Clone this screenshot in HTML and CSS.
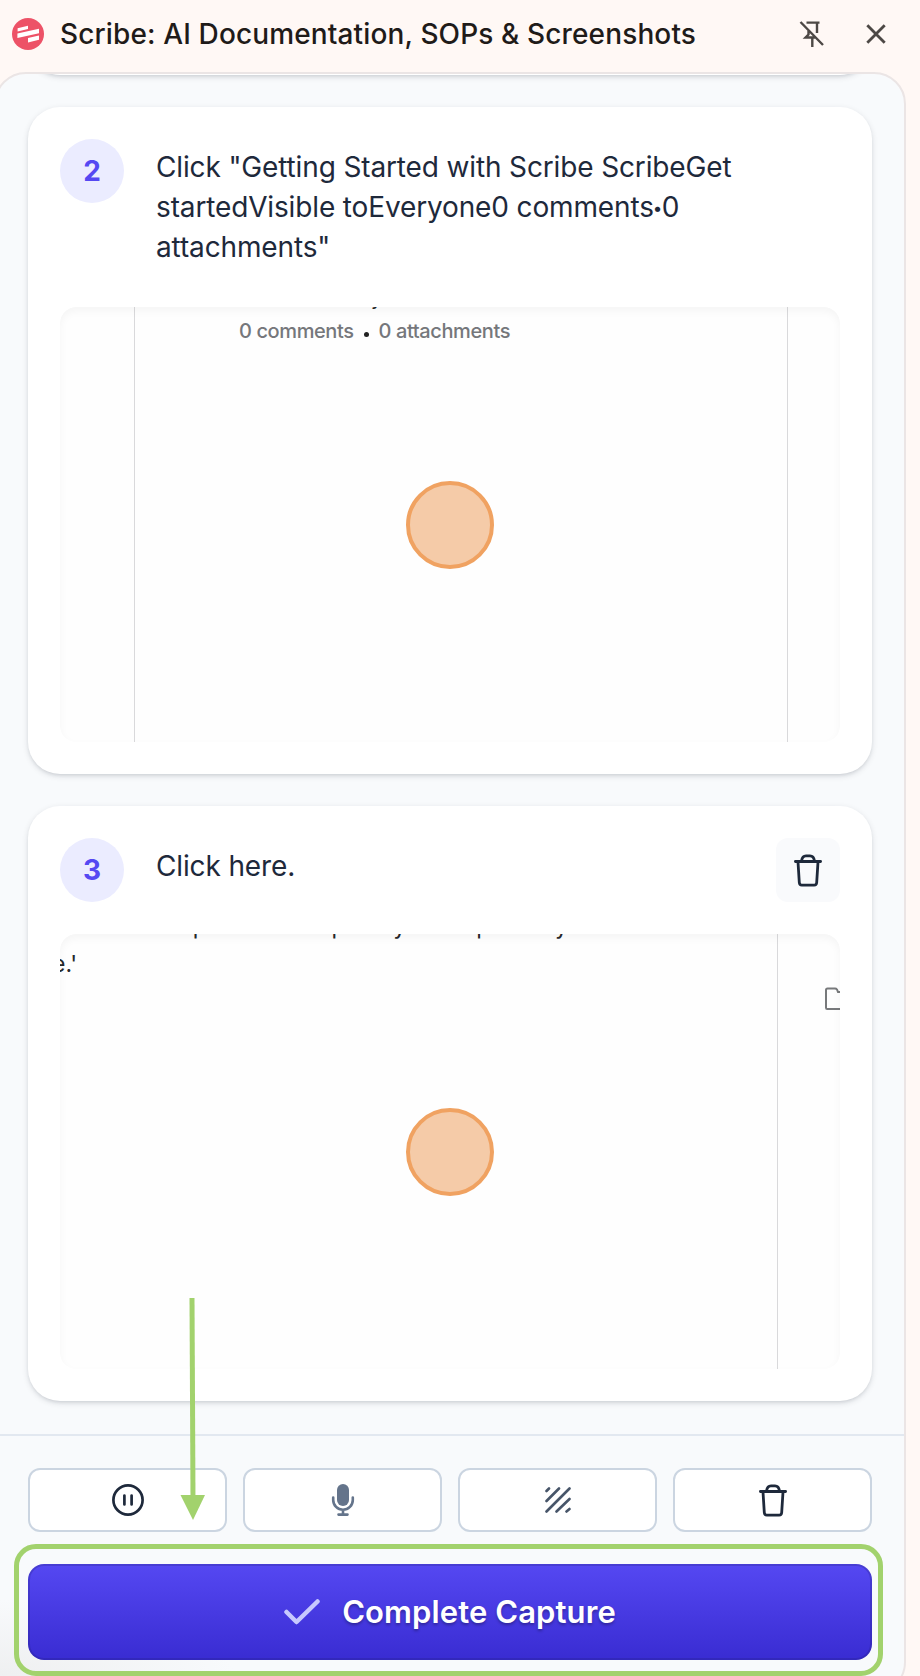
FILE: index.html
```html
<!DOCTYPE html>
<html lang="en">
  <head>
    <meta charset="UTF-8" />
    <meta name="viewport" content="width=device-width, initial-scale=1.0" />
    <title>Scribe: AI Documentation, SOPs &amp; Screenshots</title>
    <link rel="stylesheet" href="styles.css">
  </head>
  <body>
    <header class="topbar">
      <svg class="logo" viewBox="0 0 32 32">
        <circle cx="16" cy="16" r="16" fill="#ed5267" />
        <path d="M5.6 10.3L16 7.8V11L5.6 13.6zM5.4 15.4L27 10.8V15.3L5.4 19.9zM16 20L27 17.4V21.8L16 24.4z" fill="#fff" />
      </svg>
      <h1 class="title">Scribe: AI Documentation, SOPs &amp; Screenshots</h1>
      <button class="icon-button" aria-label="Unpin">
        <svg width="26" height="28" viewBox="0 0 26 28" fill="none" stroke="#4d4845" stroke-width="2.4">
          <path d="M1.5 2L24 25M7.5 2.6H20.5M18 2.6V13M9.5 10v4.5L6.5 17.5H16M13.3 17.5V27" />
        </svg>
      </button>
      <button class="icon-button" aria-label="Close">
        <svg width="20" height="20" viewBox="0 0 20 20" fill="none" stroke="#4d4845" stroke-width="2.8">
          <path d="M1.3 1.3l17.4 17.4M18.7 1.3L1.3 18.7" />
        </svg>
      </button>
    </header>

    <main class="panel">
      <div class="steps">
        <div class="card card-previous"></div>

        <div class="card">
          <div class="step-head">
            <span class="step-number">2</span>
            <p class="step-text">Click "Getting Started with Scribe ScribeGet startedVisible toEveryone0 comments<span class="bullet">•</span>0 attachments"</p>
          </div>
          <div class="preview">
            <div class="page page-narrow">
              <p class="clipped-name">y</p>
              <p class="meta"><span>0 comments</span><i class="dot"></i><span>0 attachments</span></p>
            </div>
            <span class="click-marker"></span>
          </div>
        </div>

        <div class="card">
          <div class="step-head">
            <span class="step-number">3</span>
            <p class="step-text">Click here.</p>
            <button class="delete-step" aria-label="Delete step">
              <svg width="28" height="33" viewBox="0 0 28 33" fill="none" stroke="#1e293b" stroke-width="2.8" stroke-linecap="round" stroke-linejoin="round">
                <path d="M1.4 7.5H26.6M7.5 7C8 3.5 9.5 1.8 12 1.8h4c2.5 0 4 1.7 4.5 5.2M4 8l1.3 20.5q.2 2.7 2.5 2.7h12.4q2.3 0 2.5-2.7L24 8" />
              </svg>
            </button>
          </div>
          <div class="preview">
            <div class="page page-wide">
              <p class="clipped-line">'Find the option to complete your capture by</p>
              <p class="clipped-end">e.'</p>
            </div>
            <svg class="file-icon" width="15" height="24" viewBox="0 0 15 24" fill="none" stroke="#77797b" stroke-width="2">
              <path d="M15 22H2.2q-1.2 0-1.2-1.2V3q0-1.5 1.5-1.5H10q1.2 0 2 1l1 2.5h3" />
            </svg>
            <span class="click-marker"></span>
          </div>
        </div>
      </div>

      <footer class="footer">
        <div class="tools">
          <button class="tool" aria-label="Pause">
            <svg width="32" height="32" viewBox="0 0 32 32" fill="none" stroke="#1e293b" stroke-width="2.7" stroke-linecap="round">
              <circle cx="16" cy="16" r="14.6" />
              <path d="M12.4 11.5v9M19.6 11.5v9" />
            </svg>
          </button>
          <button class="tool" aria-label="Microphone">
            <svg width="24" height="32" viewBox="0 0 24 32" fill="none" stroke="#64748b" stroke-width="2.6" stroke-linecap="round">
              <rect x="6" y="0" width="12" height="22" rx="6" fill="#64748b" stroke="none" />
              <path d="M2.2 13.5V16a9.8 9.8 0 0 0 19.6 0v-2.5M12 26v4M7.5 30.6h9" />
            </svg>
          </button>
          <button class="tool" aria-label="Blur">
            <svg width="26" height="26" viewBox="0 0 26 26" fill="none" stroke="#475569" stroke-width="2.6" stroke-linecap="round">
              <path d="M1.5 4L4 1.5M1.5 14L14 1.5M1.5 24.5L24.5 1.5M11.5 24.5L24.5 12M21.5 24.5L24.5 22" />
            </svg>
          </button>
          <button class="tool" aria-label="Delete capture">
            <svg width="28" height="33" viewBox="0 0 28 33" fill="none" stroke="#1e293b" stroke-width="2.8" stroke-linecap="round" stroke-linejoin="round">
              <path d="M1.4 7.5H26.6M7.5 7C8 3.5 9.5 1.8 12 1.8h4c2.5 0 4 1.7 4.5 5.2M4 8l1.3 20.5q.2 2.7 2.5 2.7h12.4q2.3 0 2.5-2.7L24 8" />
            </svg>
          </button>
        </div>
        <div class="complete-wrap">
          <button class="complete">
            <svg width="36" height="26" viewBox="0 0 36 26" fill="none" stroke="#c7c9fe" stroke-width="4.5" stroke-linecap="round" stroke-linejoin="round">
              <path d="M2.5 13l10 10L33.5 2.5" />
            </svg>
            <span class="complete-label">Complete Capture</span>
          </button>
          <span class="highlight"></span>
        </div>
      </footer>
    </main>

    <svg class="arrow" width="26" height="224" viewBox="0 0 26 224">
      <path d="M12 0L13 200" stroke="#a2d26d" stroke-width="5" />
      <path d="M0.5 197H25L13 222z" fill="#a2d26d" />
    </svg>
  </body>
</html>
```

FILE: styles.css
```css
* {
  box-sizing: border-box;
}
body {
  margin: 0;
  width: 920px;
  height: 1676px;
  overflow: hidden;
  position: relative;
  background-color: #fff8f5;
  font-family: Inter, "Liberation Sans", sans-serif;
}
h1,
p {
  margin: 0;
}
button {
  border: none;
  padding: 0;
  font-family: inherit;
  display: flex;
  align-items: center;
  justify-content: center;
}
svg {
  display: block;
  flex: none;
}
.topbar {
  height: 72px;
  display: flex;
  align-items: center;
  padding: 0 24px 4px 12px;
}
.logo {
  width: 32px;
  height: 32px;
}
.title {
  flex: 1;
  margin-left: 16px;
  font-size: 28px;
  font-weight: 550;
  line-height: 40px;
  letter-spacing: 0.13px;
  white-space: nowrap;
  color: #1f1b19;
}
.icon-button {
  width: 40px;
  height: 40px;
  margin-left: 24px;
  background: none;
}
.panel {
  width: 912px;
  height: 1622px;
  margin-left: -6px;
  border: 2px solid #ebe5e5;
  border-radius: 32px;
  overflow: hidden;
  background: radial-gradient(ellipse 240px 80px at 0 1606px, #eeeff0, #f8fafc);
}
.steps {
  display: flex;
  flex-direction: column;
  gap: 32px;
  height: 1360px;
  padding: 0 32px;
}
.card {
  padding: 32px;
  border-radius: 32px;
  background-color: #fff;
  box-shadow: 0 2px 6px rgba(15, 23, 42, 0.12), 0 2px 4px -2px rgba(15, 23, 42, 0.16);
}
.card-previous {
  height: 80px;
  margin-top: -79px;
  flex: none;
}
.step-head {
  display: flex;
  align-items: flex-start;
  margin-bottom: 32px;
}
.step-number {
  width: 64px;
  height: 64px;
  border-radius: 50%;
  background-color: #ebecff;
  color: #5548f2;
  font-size: 28px;
  font-weight: 700;
  line-height: 64px;
  text-align: center;
}
.step-text {
  flex: 1;
  margin-left: 32px;
  padding: 8px 0;
  font-size: 28px;
  line-height: 40px;
  letter-spacing: -0.14px;
  color: #1e293b;
}
.bullet {
  display: inline-block;
  width: 8px;
  font-size: 17px;
  line-height: 20px;
  text-indent: -1px;
  vertical-align: 3px;
}
.delete-step {
  width: 64px;
  height: 64px;
  border-radius: 12px;
  background-color: #f9fafc;
}
.preview {
  position: relative;
  display: flex;
  height: 435px;
  border-radius: 16px;
  overflow: hidden;
  background-color: #fefefe;
}
.preview::after {
  content: "";
  position: absolute;
  inset: 0;
  border-radius: 16px;
  box-shadow: inset 0 4px 8px rgba(0, 0, 0, 0.04);
}
.page {
  border-right: 1px solid #d9d9db;
}
.page-narrow {
  width: 654px;
  margin-left: 74px;
  border-left: 1px solid #d9d9db;
  padding-left: 104px;
}
.page-wide {
  width: 718px;
}
.clipped-name {
  height: 20px;
  margin: -19px 0 11px 132px;
  font-size: 20px;
  line-height: 20px;
  color: #222;
}
.meta {
  display: flex;
  align-items: center;
  gap: 10px;
  line-height: 24px;
  font-size: 20px;
  font-weight: 450;
  letter-spacing: -0.4px;
  color: #75777b;
}
.dot {
  width: 5px;
  height: 5px;
  margin-top: 6px;
  border-radius: 50%;
  background-color: #222;
}
.clipped-line,
.clipped-end {
  font-size: 23px;
  line-height: 38px;
  white-space: nowrap;
  color: #26282a;
}
.clipped-line {
  margin: -27px 0 0 15px;
  letter-spacing: 0.25px;
}
.clipped-end {
  margin-left: -8px;
}
.file-icon {
  margin: 53px 0 0 auto;
}
.click-marker {
  position: absolute;
  left: 346px;
  top: 174px;
  width: 88px;
  height: 88px;
  border: 4px solid #f0a261;
  border-radius: 50%;
  background-color: #f5cba8;
}
.footer {
  height: 260px;
  padding: 32px 32px 0;
  border-top: 2px solid #e2e8f0;
}
.tools {
  display: grid;
  grid-template-columns: repeat(4, 1fr);
  gap: 16px;
  margin-bottom: 32px;
}
.tool {
  height: 64px;
  border: 2px solid #cbd5e1;
  border-radius: 12px;
  background-color: #fff;
}
.complete-wrap {
  position: relative;
}
.complete {
  width: 100%;
  height: 96px;
  gap: 22px;
  border: 2px solid rgba(30, 27, 120, 0.25);
  border-radius: 16px;
  background: linear-gradient(#5548f2, #392cd2) border-box;
  color: #fff;
  font-size: 31px;
  font-weight: 600;
  letter-spacing: 0.1px;
  text-shadow: 0 2px 3px rgba(0, 0, 0, 0.3);
}
.complete-label {
  padding-bottom: 2px;
}
.highlight {
  position: absolute;
  left: -14px;
  top: -20px;
  width: 869px;
  height: 132px;
  border: 5px solid #a2d26d;
  border-radius: 22px;
}
.arrow {
  position: absolute;
  left: 180px;
  top: 1298px;
}
```
